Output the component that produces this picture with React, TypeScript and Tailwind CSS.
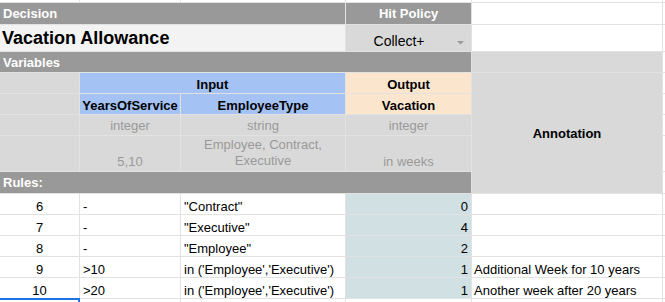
import React from 'react';

type Rule = {
  id: number;
  years: string;
  type: string;
  weeks: number;
  note?: string;
};

const rules: Rule[] = [
  { id: 6, years: '-', type: '"Contract"', weeks: 0 },
  { id: 7, years: '-', type: '"Executive"', weeks: 4 },
  { id: 8, years: '-', type: '"Employee"', weeks: 2 },
  { id: 9, years: '>10', type: "in ('Employee','Executive')", weeks: 1, note: 'Additional Week for 10 years' },
  { id: 10, years: '>20', type: "in ('Employee','Executive')", weeks: 1, note: 'Another week after 20 years' },
];

const Blank = ({ className = 'bg-white' }: { className?: string }) => <div className={className} />;

export default function App() {
  return (
    <div className="w-[665px] h-[302px] overflow-hidden bg-white font-['Liberation_Sans',Arial,sans-serif] text-[13px] leading-[15px] text-black">
      <div className="grid h-full grid-cols-[79px_100px_164px_125px_190px_1fr] grid-rows-[2px_21px_26px_20px_20px_20px_20px_35px_21px_20px_20px_20px_20px_20px_1fr] gap-px bg-[#e2e2e2]">
        {/* partial row above */}
        <Blank />
        <Blank />
        <Blank />
        <Blank />
        <Blank />
        <Blank />

        {/* Decision header */}
        <div className="col-span-3 flex items-center bg-[#999999] pl-[3px] font-bold text-white">Decision</div>
        <div className="flex items-center justify-center bg-[#999999] font-bold text-white">Hit Policy</div>
        <Blank />
        <Blank />

        {/* Decision name + hit policy */}
        <div className="col-span-3 flex items-center bg-[#f3f3f3] pl-[2px] text-[18px] leading-[21px] font-bold">
          Vacation Allowance
        </div>
        <div className="relative flex items-end justify-center bg-[#d9d9d9] pb-[2px] pr-[19px] text-[14px] leading-[16px]">
          Collect+
          <svg className="absolute right-[7px] top-[16px]" width="7" height="4" viewBox="0 0 7 4">
            <polygon points="0,0 7,0 3.5,3.5" fill="#999999" />
          </svg>
        </div>
        <Blank />
        <Blank />

        {/* Variables */}
        <div className="col-span-4 flex items-center bg-[#999999] pl-[3px] font-bold text-white">Variables</div>
        <Blank className="bg-[#d9d9d9]" />
        <Blank />

        {/* Input / Output */}
        <Blank className="bg-[#d9d9d9]" />
        <div className="col-span-2 flex items-end justify-center bg-[#a4c2f4] pb-px font-bold">Input</div>
        <div className="flex items-end justify-center bg-[#fce5cd] pb-px font-bold">Output</div>
        <div className="row-span-5 flex items-center justify-center bg-[#d9d9d9] font-bold">Annotation</div>
        <Blank />

        {/* names */}
        <Blank className="bg-[#d9d9d9]" />
        <div className="flex items-end justify-center bg-[#a4c2f4] pb-px font-bold">YearsOfService</div>
        <div className="flex items-end justify-center bg-[#a4c2f4] pb-px font-bold">EmployeeType</div>
        <div className="flex items-end justify-center bg-[#fce5cd] pb-px font-bold">Vacation</div>
        <Blank />

        {/* types */}
        <Blank className="bg-[#d9d9d9]" />
        <div className="flex items-center justify-center bg-[#d9d9d9] text-[#999999]">integer</div>
        <div className="flex items-center justify-center bg-[#d9d9d9] text-[#999999]">string</div>
        <div className="flex items-center justify-center bg-[#d9d9d9] text-[#999999]">integer</div>
        <Blank />

        {/* allowed values */}
        <Blank className="bg-[#d9d9d9]" />
        <div className="flex items-end justify-center bg-[#d9d9d9] pb-[2px] text-[#999999]">5,10</div>
        <div className="flex items-end justify-center bg-[#d9d9d9] pb-[2px] text-center leading-[16px] text-[#999999]">
          Employee, Contract,
          <br />
          Executive
        </div>
        <div className="flex items-end justify-center bg-[#d9d9d9] pb-[2px] text-[#999999]">in weeks</div>
        <Blank />

        {/* Rules header */}
        <div className="col-span-4 flex items-center bg-[#999999] pl-[3px] font-bold text-white">Rules:</div>
        <Blank />

        {rules.map((r) => (
          <React.Fragment key={r.id}>
            <div className="flex items-end justify-center bg-white">{r.id}</div>
            <div className="flex items-end bg-white pl-[3px]">{r.years}</div>
            <div className="flex items-end bg-white pl-[3px] whitespace-nowrap">{r.type}</div>
            <div className="flex items-end justify-end bg-[#d0e0e3] pr-[3px]">{r.weeks}</div>
            <div className="flex items-end bg-white pl-[2px] whitespace-nowrap">{r.note ?? ''}</div>
            <Blank />
          </React.Fragment>
        ))}

        {/* next empty row with active cell */}
        <div className="relative bg-white">
          <div className="absolute -top-px left-0 -right-px bottom-0 border-t-2 border-r-2 border-[#1a73e8]" />
        </div>
        <Blank />
        <Blank />
        <Blank />
        <Blank />
        <Blank />
      </div>
    </div>
  );
}
